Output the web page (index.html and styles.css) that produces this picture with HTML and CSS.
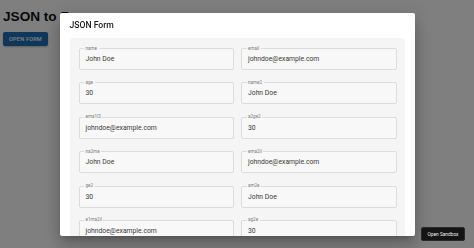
FILE: index.html
```html
<!DOCTYPE html>
<html lang="en">
<head>
    <meta charset="UTF-8">
    <title>JSON to Form</title>
    <link rel="stylesheet" href="styles.css">
</head>
<body>
    <h1>JSON to Form</h1>
    <button class="abrir">Open Form</button>

    <div class="fondo">
        <div class="dialogo">
            <h2 class="titulo">JSON Form</h2>
            <div class="contenido">
                <div class="formulario">
                    <div class="campo"><span class="etiqueta">name</span><span class="valor">John Doe</span></div>
                    <div class="campo"><span class="etiqueta">email</span><span class="valor">johndoe@example.com</span></div>
                    <div class="campo"><span class="etiqueta">age</span><span class="valor">30</span></div>
                    <div class="campo"><span class="etiqueta">name2</span><span class="valor">John Doe</span></div>
                    <div class="campo"><span class="etiqueta">ema1l3</span><span class="valor">johndoe@example.com</span></div>
                    <div class="campo"><span class="etiqueta">a2ge2</span><span class="valor">30</span></div>
                    <div class="campo"><span class="etiqueta">na2me</span><span class="valor">John Doe</span></div>
                    <div class="campo"><span class="etiqueta">ema2il</span><span class="valor">johndoe@example.com</span></div>
                    <div class="campo"><span class="etiqueta">ge2</span><span class="valor">30</span></div>
                    <div class="campo"><span class="etiqueta">am2e</span><span class="valor">John Doe</span></div>
                    <div class="campo"><span class="etiqueta">e1ma2il</span><span class="valor">johndoe@example.com</span></div>
                    <div class="campo"><span class="etiqueta">ag2e</span><span class="valor">30</span></div>
                </div>
            </div>
        </div>
    </div>

    <button class="sandbox">Open Sandbox</button>
</body>
</html>
```

FILE: styles.css
```css
* {
    box-sizing: border-box;
}
body {
    margin: 0;
    padding: 9px 3px;
    background-color: white;
    font-family: 'Liberation Sans', Arial, sans-serif;
    color: #111;
}
h1 {
    font-size: 13.6px;
    line-height: 15px;
    margin: 0 0 8px;
}
.abrir {
    display: block;
    width: 45px;
    height: 14px;
    padding: 0;
    border: none;
    border-radius: 2px;
    background-color: #1f6fb8;
    color: white;
    font-family: 'Roboto', sans-serif;
    font-weight: 500;
    font-size: 5.6px;
    letter-spacing: 0.03em;
    text-transform: uppercase;
    box-shadow: 0 1px 2px rgba(0,0,0,0.25);
}
.fondo {
    position: fixed;
    top: 0;
    left: 0;
    right: 0;
    bottom: 0;
    background-color: rgba(0,0,0,0.5);
    display: flex;
    align-items: center;
    justify-content: center;
}
.dialogo {
    width: 355px;
    height: 223px;
    background-color: white;
    border-radius: 2px;
    display: flex;
    flex-direction: column;
    overflow: hidden;
    box-shadow: 0 5px 6px -3px rgba(0,0,0,0.2), 0 10px 16px 1px rgba(0,0,0,0.14), 0 4px 19px 3px rgba(0,0,0,0.12);
}
.titulo {
    margin: 0;
    padding: 6px 10px 7px;
    font-family: 'Roboto', sans-serif;
    font-weight: 500;
    font-size: 8.6px;
    line-height: 12.5px;
    color: #1a1a1a;
}
.contenido {
    flex: 1;
    overflow: hidden;
    padding: 0 10px;
}
.formulario {
    background-color: #f5f5f5;
    border-radius: 3px;
    padding: 10px 8px 10px 9px;
    display: grid;
    grid-template-columns: 1fr 1fr;
    column-gap: 7px;
    row-gap: 12.4px;
}
.campo {
    position: relative;
    height: 22px;
    border: 1px solid #dcdcdc;
    border-radius: 2px;
    background-color: #f8f8f8;
    display: flex;
    align-items: center;
    padding: 0 6px;
}
.etiqueta {
    position: absolute;
    top: -3.5px;
    left: 4.5px;
    padding: 0 1.5px;
    background-color: #f6f6f6;
    font-family: 'Roboto', sans-serif;
    font-size: 4.6px;
    line-height: 5px;
    color: #808080;
}
.valor {
    font-family: 'Roboto', sans-serif;
    font-size: 6.8px;
    color: #383838;
}
.sandbox {
    position: fixed;
    right: 9px;
    bottom: 7px;
    width: 44px;
    height: 14px;
    padding: 0;
    border: 1px solid #2a2a2a;
    border-radius: 2px;
    background-color: #141414;
    color: #eee;
    font-family: 'Roboto', sans-serif;
    font-size: 4.8px;
}
```
